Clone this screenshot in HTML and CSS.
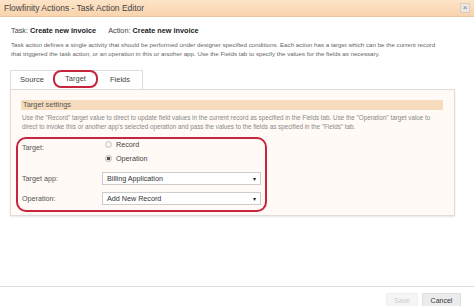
FILE: index.html
```html
<!DOCTYPE html>
<html lang="en">
<head>
  <meta charset="UTF-8">
  <title>Flowfinity Actions - Task Action Editor</title>
  <link rel="stylesheet" href="styles.css">
</head>
<body>

  <div class="dialog">
    <div class="titlebar">
      <span>Flowfinity Actions - Task Action Editor</span>
      <span class="close">&#215;</span>
    </div>

    <div class="content">
      <p class="task">Task: <b>Create new invoice</b> <span class="action">Action: <b>Create new invoice</b></span></p>
      <p class="intro">Task action defines a single activity that should be performed under designer specified conditions. Each action has a target which can be the current record<br>
        that triggered the task action, or an operation in this or another app. Use the Fields tab to specify the values for the fields as necessary.</p>

      <ul class="tabs">
        <li class="tab">Source</li>
        <li class="tab active">Target</li>
        <li class="tab">Fields</li>
      </ul>

      <div class="panel">
        <div class="band">Target settings</div>
        <p class="hint">Use the "Record" target value to direct to update field values in the current record as specified in the Fields tab. Use the "Operation" target value to<br>
          direct to invoke this or another app's selected operation and pass the values to the fields as specified in the "Fields" tab.</p>

        <div class="form">
          <span class="label top">Target:</span>
          <div class="radios">
            <div class="radio"><span class="dot"></span>Record</div>
            <div class="radio"><span class="dot checked"></span>Operation</div>
          </div>

          <span class="label">Target app:</span>
          <div class="select"><span>Billing Application</span><span class="arrow">&#9662;</span></div>

          <span class="label">Operation:</span>
          <div class="select"><span>Add New Record</span><span class="arrow">&#9662;</span></div>
        </div>
      </div>
    </div>

    <div class="footer">
      <button class="btn save">Save</button>
      <button class="btn cancel">Cancel</button>
    </div>
  </div>

</body>
</html>
```

FILE: styles.css
```css
* {
  margin: 0;
  padding: 0;
  box-sizing: border-box;
}
body {
  font-family: 'Liberation Sans', Arial, sans-serif;
  color: #333;
  background: #fff;
}

.titlebar {
  display: flex;
  justify-content: space-between;
  align-items: center;
  height: 17px;
  padding: 0 4px;
  border-bottom: 1px solid #eac6a0;
  background: linear-gradient(#fde4c8, #f9d3ad);
  font-size: 8.5px;
  color: #444;
}
.close {
  width: 10px;
  height: 10px;
  border: 1px solid #d8cdc2;
  background: #ece7e2;
  font-size: 8px;
  line-height: 8px;
  text-align: center;
  color: #777;
}

.content {
  height: 260px;
  padding: 0 19px 0 10px;
}
.task {
  margin: 9px 0 0 1px;
  font-size: 7.3px;
  line-height: 9px;
  color: #444;
}
.task b {
  color: #222;
}
.task .action {
  margin-left: 10px;
}
.intro {
  margin: 5px 0 0 1px;
  font-size: 6.2px;
  line-height: 9px;
  color: #666;
  white-space: nowrap;
}

.tabs {
  display: flex;
  width: fit-content;
  margin-top: 12px;
  list-style: none;
  border: 1px solid #ddd;
  border-bottom: none;
  background: #fff;
}
.tab {
  height: 18px;
  line-height: 18px;
  font-size: 7.5px;
  color: #444;
  text-align: center;
}
.tab:nth-child(1) {
  width: 42px;
}
.tab:nth-child(3) {
  width: 44px;
}
.tab.active {
  width: 45px;
  height: 18px;
  line-height: 14px;
  margin-top: -1px;
  border: 2px solid #c5253d;
  border-radius: 8px;
}

.panel {
  height: 127px;
  padding: 10px 11px 0 10px;
  border: 1px solid #ddd;
  background: #fffaf6;
  box-shadow: 0 1px 2px rgba(0, 0, 0, 0.1);
}
.band {
  height: 10px;
  line-height: 10px;
  padding-left: 2px;
  background: #f6dcbd;
  font-size: 7.4px;
  color: #555;
}
.hint {
  margin: 3px 0 0 1px;
  font-size: 6.3px;
  line-height: 9px;
  color: #888;
  white-space: nowrap;
}

.form {
  display: grid;
  grid-template-columns: 80px 1fr;
  row-gap: 7px;
  width: 251px;
  margin: 6px 0 0 -5px;
  padding: 0 4px 5px 4px;
  border: 2px solid #c5253d;
  border-radius: 10px;
  font-size: 7.2px;
}
.label {
  align-self: center;
  color: #555;
  line-height: 10px;
}
.label.top {
  align-self: start;
  padding-top: 4px;
}
.radios {
  margin-top: -2px;
}
.radio {
  display: flex;
  align-items: center;
  height: 14px;
  padding-left: 3px;
  color: #444;
}
.dot {
  width: 7px;
  height: 7px;
  margin-right: 4px;
  border: 1px solid #c8c8c8;
  border-radius: 50%;
  background: radial-gradient(#fff, #e4e4e4);
}
.dot.checked {
  background: radial-gradient(circle, #555 0 1.5px, #eee 2px);
  border-color: #bbb;
}
.select {
  display: flex;
  justify-content: space-between;
  align-items: center;
  height: 13px;
  padding: 0 4px;
  border: 1px solid #ccc;
  background: #fff;
  color: #333;
}
.arrow {
  font-size: 6px;
  color: #222;
}

.footer {
  display: flex;
  justify-content: flex-end;
  gap: 4px;
  padding: 6px 13px 0 0;
  border-top: 1px solid #ddd;
}
.btn {
  height: 15px;
  font-family: inherit;
  font-size: 7px;
  border-radius: 1px;
}
.save {
  width: 32px;
  border: 1px solid #eee;
  background: #f5f5f5;
  color: #ccc;
}
.cancel {
  width: 39px;
  border: 1px solid #ddd;
  background: #ececec;
  color: #333;
}
```
